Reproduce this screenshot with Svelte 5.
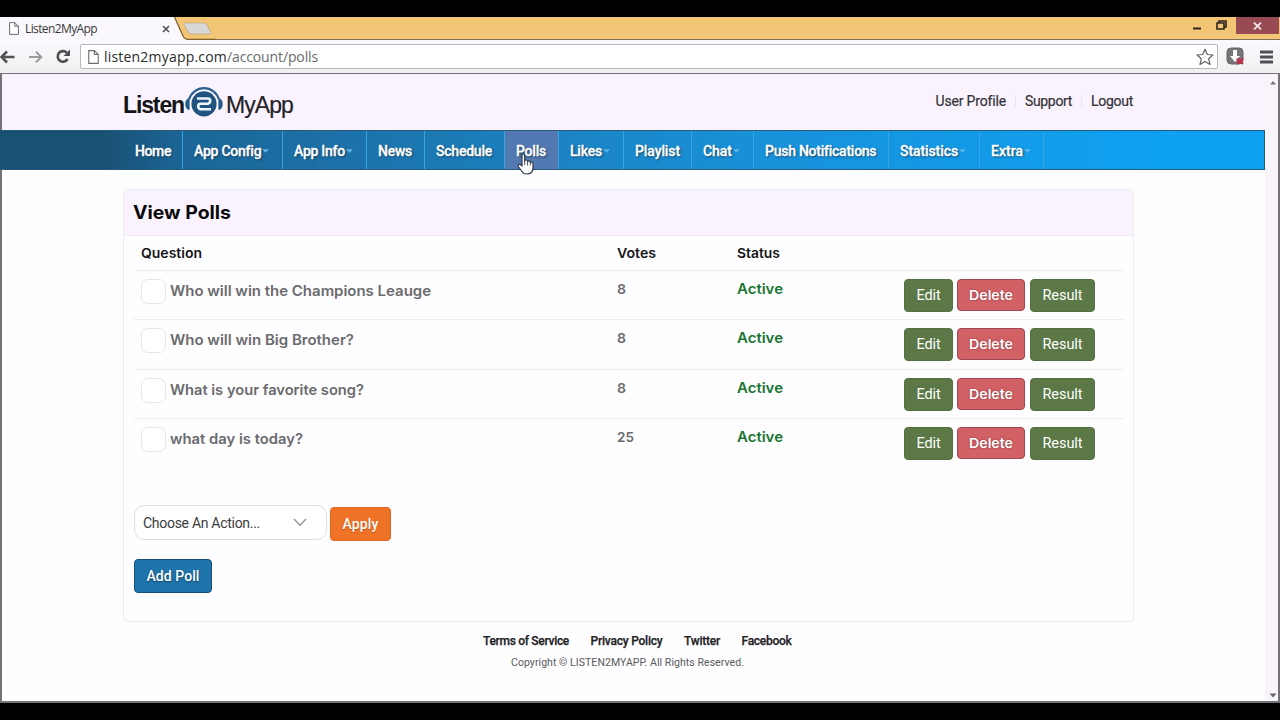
<script>
  const nav = [
    { label: 'Home', cell: 59, w: 36 },
    { label: 'App Config', cell: 100, w: 67, menu: true },
    { label: 'App Info', cell: 84, w: 51, menu: true },
    { label: 'News', cell: 58, w: 34 },
    { label: 'Schedule', cell: 80, w: 56 },
    { label: 'Polls', cell: 54, w: 30, active: true },
    { label: 'Likes', cell: 65, w: 32, menu: true },
    { label: 'Playlist', cell: 68, w: 45 },
    { label: 'Chat', cell: 62, w: 29, menu: true },
    { label: 'Push Notifications', cell: 135, w: 111 },
    { label: 'Statistics', cell: 91, w: 58, menu: true },
    { label: 'Extra', cell: 64, w: 32, menu: true }
  ];
  const polls = [
    { q: 'Who will win the Champions Leauge', w: 261, votes: '8', vw: 9 },
    { q: 'Who will win Big Brother?', w: 184, votes: '8', vw: 9 },
    { q: 'What is your favorite song?', w: 194, votes: '8', vw: 9 },
    { q: 'what day is today?', w: 133, votes: '25', vw: 17 }
  ];

  // Spreads the letters so that the label takes the given width.
  function fit(node, width) {
    const natural = node.getBoundingClientRect().width;
    const gap = (width - natural) / node.textContent.length;
    node.style.letterSpacing = gap.toFixed(3) + 'px';
  }

  function widen(node, width) {
    const natural = node.getBoundingClientRect().width;
    node.style.width = width + 'px';
    node.style.transform = `scaleX(${(width / natural).toFixed(4)})`;
  }
</script>

{#snippet t(text, w)}<span class="t" use:fit={w}>{text}</span>{/snippet}
{#snippet d(text, w)}<span class="t wide" use:widen={w}>{text}</span>{/snippet}

{#snippet page(w, h)}
  <svg width={w} height={h} viewBox="0 0 10 13"><path d="M.6.6h5.2l3.6 3.6v8.2H.6zM5.8.6v3.6h3.6" fill="#fff" stroke="#6b6b6e" stroke-width="1" /></svg>
{/snippet}

<div class="screen">
  <div class="window">
    <div class="titlebar">
      <svg class="tabshape" width="216" height="23" viewBox="0 0 216 23">
        <path d="M0 0H175L183 19Q184.500 22 188 22H216V23H0z" fill="#fbf8fd" />
        <path d="M174.500 0L183 19Q184.500 22.300 188 22.300H216" fill="none" stroke="#80622f" stroke-width="1.300" />
        <path d="M185 5H204Q206 5 207 7L211 14.500Q212 16 209 16H191Q189 16 188 14L184 6.500Q183.500 5 185 5z" transform="translate(0 1)" fill="#d9d8d9" stroke="#c7b184" stroke-width="1" />
      </svg>
      <div class="tab">
        {@render page(10, 13)}
        <div class="tabname">{@render t('Listen2MyApp', 72)}</div>
        <svg class="x" width="8" height="8" viewBox="0 0 8 8"><path d="M1 1l6 6M7 1L1 7" stroke="#555" stroke-width="1.700" /></svg>
      </div>
      <div class="controls">
        <svg width="8" height="10" viewBox="0 0 8 10"><path d="M0 7.500h8" stroke="#2c241d" stroke-width="2" /></svg>
        <svg width="11" height="10" viewBox="0 0 11 10"><path d="M3 2.500V1h7v6H8M1 3h7v6H1z" fill="none" stroke="#2c241d" stroke-width="1.600" /></svg>
        <div class="close"><svg width="9" height="8" viewBox="0 0 9 8"><path d="M1 .7l7 6.600M8 .7L1 7.300" stroke="#f6e9ea" stroke-width="1.800" /></svg></div>
      </div>
    </div>

    <div class="toolbar">
      <svg width="15" height="14" viewBox="0 0 15 14"><path d="M14.500 7H2M7 1.500L1.500 7L7 12.500" fill="none" stroke="#515154" stroke-width="2.500" /></svg>
      <svg class="fwd" width="14" height="14" viewBox="0 0 14 14"><path d="M0 7h12M7 1.800L12.300 7L7 12.200" fill="none" stroke="#9a9a9d" stroke-width="1.900" /></svg>
      <svg class="reload" width="16" height="15" viewBox="0 0 16 15"><path d="M12.600 10A5.300 5.300 0 1 1 11.800 3.700" fill="none" stroke="#4f4f52" stroke-width="2.600" /><path d="M15 .5V7H8.500z" fill="#4f4f52" /></svg>
      <div class="address">
        {@render page(11, 14)}
        <div class="url"><span class="t" use:fit={123}>listen2myapp.com</span><span class="t path" use:fit={91}>/account/polls</span></div>
        <svg class="star" width="18" height="18" viewBox="0 0 18 18"><path d="M9 1.200l2.300 5.300 5.700.5-4.300 3.800 1.300 5.700L9 13.500l-5 3 1.300-5.700L1 7l5.700-.5z" fill="#fff" stroke="#626266" stroke-width="1.200" stroke-linejoin="round" /></svg>
      </div>
      <svg class="ext" width="19" height="19" viewBox="0 0 19 19"><rect x="1" y="1" width="16" height="16" rx="4" fill="#77777a" stroke="#636366" /><path d="M7 3h4v6h3l-5 6-5-6h3z" fill="#fff" /><path d="M11 11.500l6 5.500M17 11.500L11 17" stroke="#c82a45" stroke-width="2.200" /></svg>
      <svg class="burger" width="13" height="14" viewBox="0 0 13 14"><path d="M0 2h13M0 7h13M0 12h13" stroke="#505054" stroke-width="2.800" /></svg>
    </div>

    <div class="view">
      <div class="doc">
        <header>
          <div class="logo">
            <b><span class="t" use:fit={61}>Listen</span></b>
            <svg width="40" height="36" viewBox="0 0 40 36">
              <path d="M5 15.500A15.600 15.600 0 0 1 35 15.500" fill="none" stroke="#2a628f" stroke-width="2.200" />
              <path d="M5.600 14.500V26Q1.300 25.500 1.300 20T5.600 14.500zM34.400 14.500V26Q38.700 25.500 38.700 20T34.400 14.500z" fill="#235b88" />
              <circle cx="20" cy="19.800" r="12.600" fill="#20547f" />
              <path d="M13 14.500H24Q26.200 14.500 26.200 16.800T24 19.800H16.500Q14.200 19.800 14.200 22.300T16.500 25.200H27" fill="none" stroke="#eef5fb" stroke-width="2.600" />
            </svg>
            <span class="t" use:fit={67}>MyApp</span>
          </div>
          <div class="account">
            <a href="#profile">{@render t('User Profile', 70)}</a><i></i><a href="#support">{@render t('Support', 47)}</a><i></i><a href="#logout">{@render t('Logout', 42)}</a>
          </div>
        </header>

        <nav>
          {#each nav as item}
            <a href="#nav" class:active={item.active} style="width: {item.cell}px">
              {@render t(item.label, item.w)}{#if item.menu}<svg width="7" height="4" viewBox="0 0 7 4"><path d="M0 .2h7L3.500 3.700z" fill="#5ab4ea" /></svg>{/if}
            </a>
          {/each}
        </nav>

        <section class="panel">
          <h1>{@render d('View Polls', 98)}</h1>
          <div class="table">
            <div class="row head">
              <div>{@render d('Question', 61)}</div>
              <div>{@render d('Votes', 39)}</div>
              <div>{@render d('Status', 43)}</div>
            </div>
            {#each polls as p}
              <div class="row">
                <div class="question"><span class="box"></span>{@render d(p.q, p.w)}</div>
                <div class="votes">{@render d(p.votes, p.vw)}</div>
                <div class="status">{@render d('Active', 46)}</div>
                <div class="actions">
                  <button class="edit">{@render t('Edit', 24)}</button>
                  <button class="delete">{@render d('Delete', 44)}</button>
                  <button class="result">{@render t('Result', 40)}</button>
                </div>
              </div>
            {/each}
          </div>
          <div class="bulk">
            <div class="select">
              {@render t('Choose An Action...', 117)}
              <svg width="14" height="9" viewBox="0 0 14 9"><path d="M1 1l6 6.300L13 1" fill="none" stroke="#929297" stroke-width="1.300" /></svg>
            </div>
            <button class="apply">{@render t('Apply', 36)}</button>
          </div>
          <button class="add">{@render t('Add Poll', 53)}</button>
        </section>

        <footer>
          <div class="links">
            <a href="#terms">{@render t('Terms of Service', 86)}</a>
            <a href="#privacy">{@render t('Privacy Policy', 72)}</a>
            <a href="#twitter">{@render t('Twitter', 36)}</a>
            <a href="#facebook">{@render t('Facebook', 50)}</a>
          </div>
          <div class="copy">{@render t('Copyright © LISTEN2MYAPP. All Rights Reserved.', 233)}</div>
        </footer>
      </div>
      <div class="scroll">
        <svg width="8" height="5" viewBox="0 0 8 5"><path d="M1 4.500L4 1l3 3.500z" fill="#77777b" /></svg>
        <svg width="8" height="5" viewBox="0 0 8 5"><path d="M.5.500h7L4 4.500z" fill="#66666a" /></svg>
      </div>
    </div>
  </div>
  <svg class="cursor" width="18" height="22" viewBox="0 0 18 22"><path d="M5 13V2.500Q5 1 6.300 1T7.700 2.500V8Q8 6.800 9.200 7T10.600 8.500Q11 7.500 12.200 7.900T13.300 9.400Q14 8.700 15 9.300T16 11V14.500Q16 21 10 21 6.500 21 5 18.500L1.300 13.500Q.7 12.200 1.700 11.600 3 11 5 13z" fill="#fff" stroke="#303a46" stroke-width="1.200" stroke-linejoin="round" /><path d="M7.700 8v4M10.600 9v3.500M13.300 10v2.500" stroke="#303a46" stroke-width=".9" /></svg>
</div>

<style>
  :global(body) { margin: 0; background: #000; }
  .screen, .screen * { box-sizing: border-box; }
  .screen { position: relative; width: 1280px; height: 720px; padding: 17px 0; background: #000; overflow: hidden; font-family: Roboto, sans-serif; }
  .window { height: 686px; display: flex; flex-direction: column; border-bottom: 2px solid #737376; }
  .t { display: inline-block; white-space: nowrap; }
  .wide { transform-origin: 0 50%; text-align: left; }
  svg { display: block; flex: none; }
  a { color: inherit; text-decoration: none; }
  button { font: inherit; padding: 0; }

  .titlebar { position: relative; height: 23px; flex: none; background: #f3c675; border-bottom: 1px solid #80705a; display: flex; justify-content: space-between; }
  .tabshape { position: absolute; left: 0; top: 0; }
  .tab { position: relative; display: flex; align-items: center; width: 176px; height: 22px; padding-left: 9px; font: 12px "Open Sans", sans-serif; color: #38383b; }
  .tabname { margin-left: 6px; }
  .x { margin-left: 65px; margin-top: 1px; }
  .controls { display: flex; align-items: flex-start; }
  .controls > svg { margin: 4px 15px 0 0; }
  .controls > svg:nth-child(2) { margin: 3px 9px 0 0; }
  .close { width: 43px; height: 17px; margin-right: 1px; background: #994b54; display: flex; align-items: center; justify-content: center; }

  .toolbar { height: 34px; flex: none; display: flex; align-items: center; background: linear-gradient(#fbf9fd, #f0eff1); border-bottom: 1px solid #747276; }
  .fwd { margin-left: 14px; }
  .reload { margin-left: 12px; }
  .address { width: 1138px; height: 25px; margin-left: 9px; padding: 0 3px 0 7px; border: 1px solid #b9b7bc; border-radius: 2px; background: #fff; display: flex; align-items: center; }
  .url { flex: 1; margin-left: 5px; font: 14px/20px "Open Sans", sans-serif; color: #2b2b2e; display: flex; }
  .path { color: #6a6a6e; }
  .ext { margin-left: 8px; }
  .burger { margin-left: 15px; }

  .view { flex: 1; min-height: 0; display: flex; border-left: 2px solid #737376; border-right: 2px solid #737376; background: #fefdff; }
  .doc { width: 1263px; display: flex; flex-direction: column; }
  .scroll { flex: 1; display: flex; flex-direction: column; justify-content: space-between; align-items: flex-end; padding: 6px 1px 3px 0; background: #f8f4fa; }

  header { height: 56px; flex: none; padding: 0 132px 0 121px; display: flex; justify-content: space-between; background: #faf3fe; }
  .logo { display: flex; height: 62px; align-items: center; font: 23px "Liberation Sans", sans-serif; color: #232326; }
  .logo svg { margin: -7px 1px 0 0; }
  .logo > .t { margin-left: 1px; -webkit-text-stroke: .2px; }
  .logo b { color: #151518; }
  .account { display: flex; align-items: center; height: 53px; font-size: 14px; color: #333336; -webkit-text-stroke: .2px; }
  .account i { width: 1px; height: 12px; margin: 0 9px 0 9px; background: #eae3ee; }

  nav { height: 40px; flex: none; margin-left: -2px; padding-left: 124px; display: flex; border: solid #265b7c; border-width: 1px 1px 1px 0; background: linear-gradient(90deg, #195174 0, #195174 105px, #1b6596 180px, #1c75ae 390px, #1b83c3 560px, #1891d9 760px, #129be8 1010px, #0ea1f2 1180px); }
  nav a { display: flex; align-items: center; padding: 1px 0 0 11px; border-right: 1px solid #38a4e4; color: #fff; font-size: 14px; font-weight: 500; -webkit-text-stroke: .3px #fff; text-shadow: 1px 1px 2px #143a56; }
  nav svg { margin-left: 1px; }
  nav .active { background: #5279b1; }

  .panel { width: 1011px; height: 433px; flex: none; margin: 19px 0 0 121px; border: 1px solid #eeeaf1; border-radius: 5px; overflow: hidden; }
  h1 { height: 46px; margin: 0; padding-left: 9px; border-bottom: 1px solid #eeeaf1; background: #faf3fe; font: 700 18.500px/45px Inter, sans-serif; color: #09090b; }
  .table { margin: 0 9px 0 10px; font-family: Inter, sans-serif; font-size: 14.300px; font-weight: 600; }
  .row { display: grid; grid-template-columns: 476px 120px 167px 1fr; height: 49.200px; padding: 8px 0 0 7px; border-top: 1px solid #efedf1; line-height: 20px; color: #6b6b6e; }
  .row.head { height: 34.300px; padding-top: 8px; border: 0; line-height: 19px; font-size: 13.500px; color: #151517; }
  .question { display: flex; line-height: 24px; }
  .box { width: 25px; height: 25px; margin-right: 4px; border: 1px solid #e8e5eb; border-radius: 7px; background: #fff; }
  .votes { font-size: 13.500px; }
  .status { color: #187531; }
  .actions { display: flex; align-items: flex-start; font-family: Roboto, sans-serif; font-size: 14.500px; font-weight: 400; }
  .actions button, .apply, .add { height: 33px; border: 1px solid #53703e; border-radius: 4px; background: #5b7846; color: #fff; line-height: 31px; }
  .actions .edit { width: 49px; }
  .actions .delete { width: 68px; height: 32px; margin: 0 5px 0 4px; border-color: #a44553; background: #d16165; font-family: Inter, sans-serif; font-size: 13.500px; font-weight: 600; text-shadow: 0 0 2px #812f3a; line-height: 30px; }
  .actions .result { width: 65px; }

  .bulk { display: flex; margin: 38px 0 0 10px; font-size: 14px; }
  .select { width: 193px; height: 35px; padding: 0 19px 0 8px; border: 1px solid #dfdde2; border-radius: 10px; background: #fff; display: flex; align-items: center; justify-content: space-between; color: #3b3b3e; }
  .apply { width: 61px; height: 34px; margin: 2px 0 0 3px; background: #ef7326; border-color: #de681e; font-weight: 500; line-height: 33px; text-shadow: 0 1px 1px #b34e12; }
  .add { width: 78px; height: 34px; margin: 18px 0 0 10px; background: #1f74ab; border-color: #164f77; font-size: 14px; font-weight: 500; line-height: 32px; text-shadow: 0 1px 2px #123e5c; }

  footer { display: flex; flex-direction: column; margin-left: 481px; padding-top: 11px; }
  .links { display: flex; font-size: 12px; line-height: 16px; font-weight: 500; color: #222225; -webkit-text-stroke: .25px; gap: 21.500px; }
  .copy { margin: 7px 0 0 28px; font-size: 10.500px; line-height: 13px; color: #5a5a5d; }
  .cursor { position: absolute; left: 517px; top: 153px; }
</style>
